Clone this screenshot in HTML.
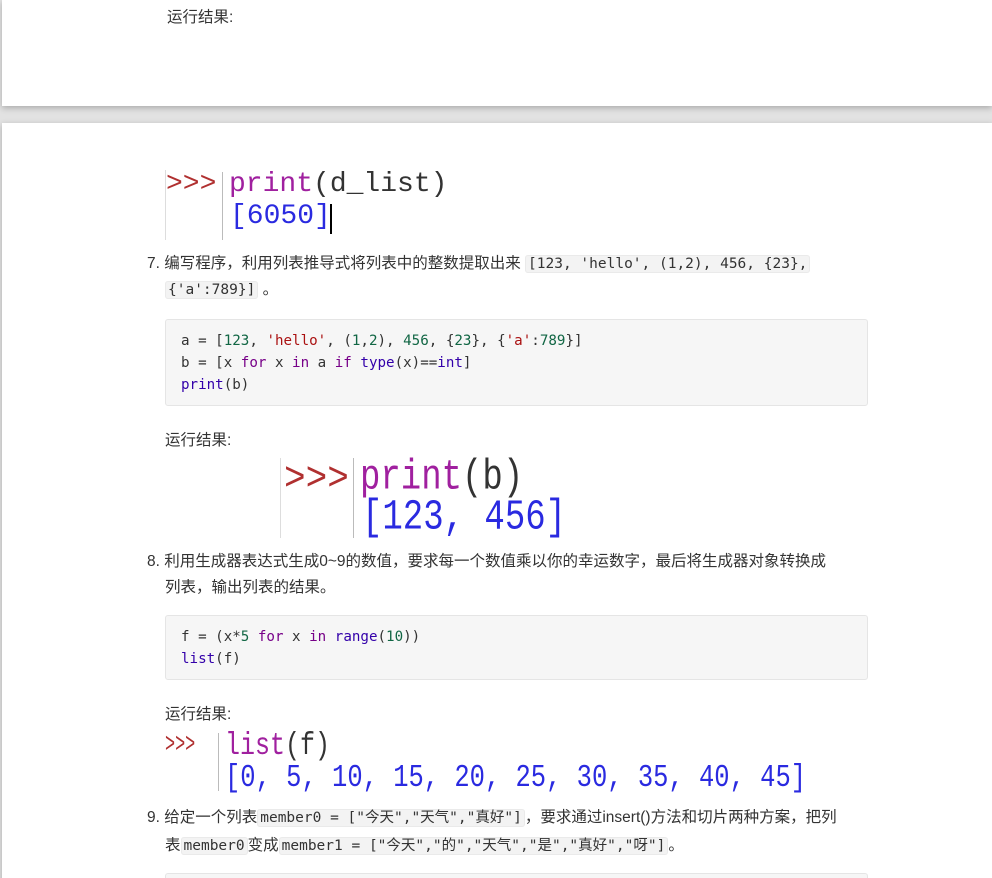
<!DOCTYPE html>
<html><head><meta charset="utf-8"><style>
html,body{margin:0;width:992px;height:878px;overflow:hidden}
body{background:#e2e2e2;font-family:"Liberation Sans","Noto Sans CJK SC",sans-serif;color:#333;font-size:15.5px;position:relative}
.card{position:absolute;left:2px;right:0;background:#fff;box-shadow:0 2px 6px rgba(0,0,0,.25)}
.a{position:absolute;white-space:nowrap}
.code{position:absolute;left:165px;width:703px;background:#f6f6f6;border:1px solid #e5e5e5;border-radius:3px;font-family:"DejaVu Sans Mono","Liberation Mono",monospace;font-size:14.2px;line-height:22px;padding:10px 15px;box-sizing:border-box;color:#333}
.ic{font-family:"DejaVu Sans Mono","Liberation Mono","Noto Sans CJK SC",monospace;font-size:14.5px;background:#f3f3f3;border:1px solid #eaeaea;border-radius:3px;padding:0 2px}
.k{color:#770088}.n{color:#116644}.s{color:#aa1111}.b{color:#3300aa}
.ser{font-family:"Liberation Mono",monospace;position:absolute;white-space:nowrap;line-height:1;transform-origin:left top}
.red{color:#b03030}.pur{color:#a0209f}.blu{color:#2a2ae0}
.vl{position:absolute;width:1px;background:#bbb}
</style></head><body>
<div class="card" style="top:0;height:106px"><div class="a" style="left:165px;top:5px">运行结果:</div></div>
<div class="card" style="top:123px;height:760px"></div>
<!-- image 1 -->
<div class="vl" style="left:165px;top:170px;height:70px;background:#ddd"></div>
<div class="vl" style="left:222px;top:172px;height:68px"></div>
<div class="ser red" style="left:166px;top:171px;font-size:28px">&gt;&gt;&gt;</div>
<div class="ser pur" style="left:229px;top:171px;font-size:28px">print<span style="color:#333">(d_list)</span></div>
<div class="ser blu" style="left:230px;top:203px;font-size:28px">[6050]</div>
<div class="vl" style="left:330px;top:204px;height:30px;width:2px;background:#000"></div>

<div class="a" style="left:147px;top:251px">7. 编写程序，利用列表推导式将列表中的整数提取出来 <span class="ic">[123, 'hello', (1,2), 456, {23},</span></div>
<div class="a" style="left:165px;top:277px"><span class="ic">{'a':789}]</span> 。</div>
<div class="code" style="top:319px;height:87px">a = [<span class="n">123</span>, <span class="s">'hello'</span>, (<span class="n">1</span>,<span class="n">2</span>), <span class="n">456</span>, {<span class="n">23</span>}, {<span class="s">'a'</span>:<span class="n">789</span>}]<br>b = [x <span class="k">for</span> x <span class="k">in</span> a <span class="k">if</span> <span class="b">type</span>(x)==<span class="b">int</span>]<br><span class="b">print</span>(b)</div>
<div class="a" style="left:165px;top:428px">运行结果:</div>
<!-- image 2 -->
<div class="vl" style="left:280px;top:458px;height:80px;background:#ddd"></div>
<div class="vl" style="left:353px;top:458px;height:80px"></div>
<div class="ser red" style="left:284px;top:460px;font-size:36px;transform:scaleY(1.1)">&gt;&gt;&gt;</div>
<div class="ser pur" style="left:360px;top:457px;font-size:34px;transform:scaleY(1.25)">print<span style="color:#333">(b)</span></div>
<div class="ser blu" style="left:362px;top:497px;font-size:34px;transform:scaleY(1.25)">[123,&nbsp;456]</div>

<div class="a" style="left:147px;top:549px">8. 利用生成器表达式生成0~9的数值，要求每一个数值乘以你的幸运数字，最后将生成器对象转换成</div>
<div class="a" style="left:165px;top:575px">列表，输出列表的结果。</div>
<div class="code" style="top:615px;height:65px">f = (x*<span class="n">5</span> <span class="k">for</span> x <span class="k">in</span> <span class="b">range</span>(<span class="n">10</span>))<br><span class="b">list</span>(f)</div>
<div class="a" style="left:165px;top:702px">运行结果:</div>
<!-- image 3 -->
<div class="vl" style="left:218px;top:733px;height:58px"></div>
<div class="ser red" style="left:165px;top:732px;font-size:28px;transform:scaleX(.6)">&gt;&gt;&gt;</div>
<div class="ser pur" style="left:225px;top:730px;font-size:25px;transform:scaleY(1.25)">list<span style="color:#333">(f)</span></div>
<div class="ser blu" style="left:225px;top:762px;font-size:26px;transform:scaleX(.98) scaleY(1.2)">[0, 5, 10, 15, 20, 25, 30, 35, 40, 45]</div>

<div class="a" style="left:147px;top:805px">9. 给定一个列表<span class="ic">member0 = ["今天","天气","真好"]</span>，要求通过insert()方法和切片两种方案，把列</div>
<div class="a" style="left:165px;top:833px">表<span class="ic">member0</span>变成<span class="ic">member1 = ["今天","的","天气","是","真好","呀"]</span>。</div>
<div class="code" style="top:873px;height:40px;padding:0"></div>
</body></html>
